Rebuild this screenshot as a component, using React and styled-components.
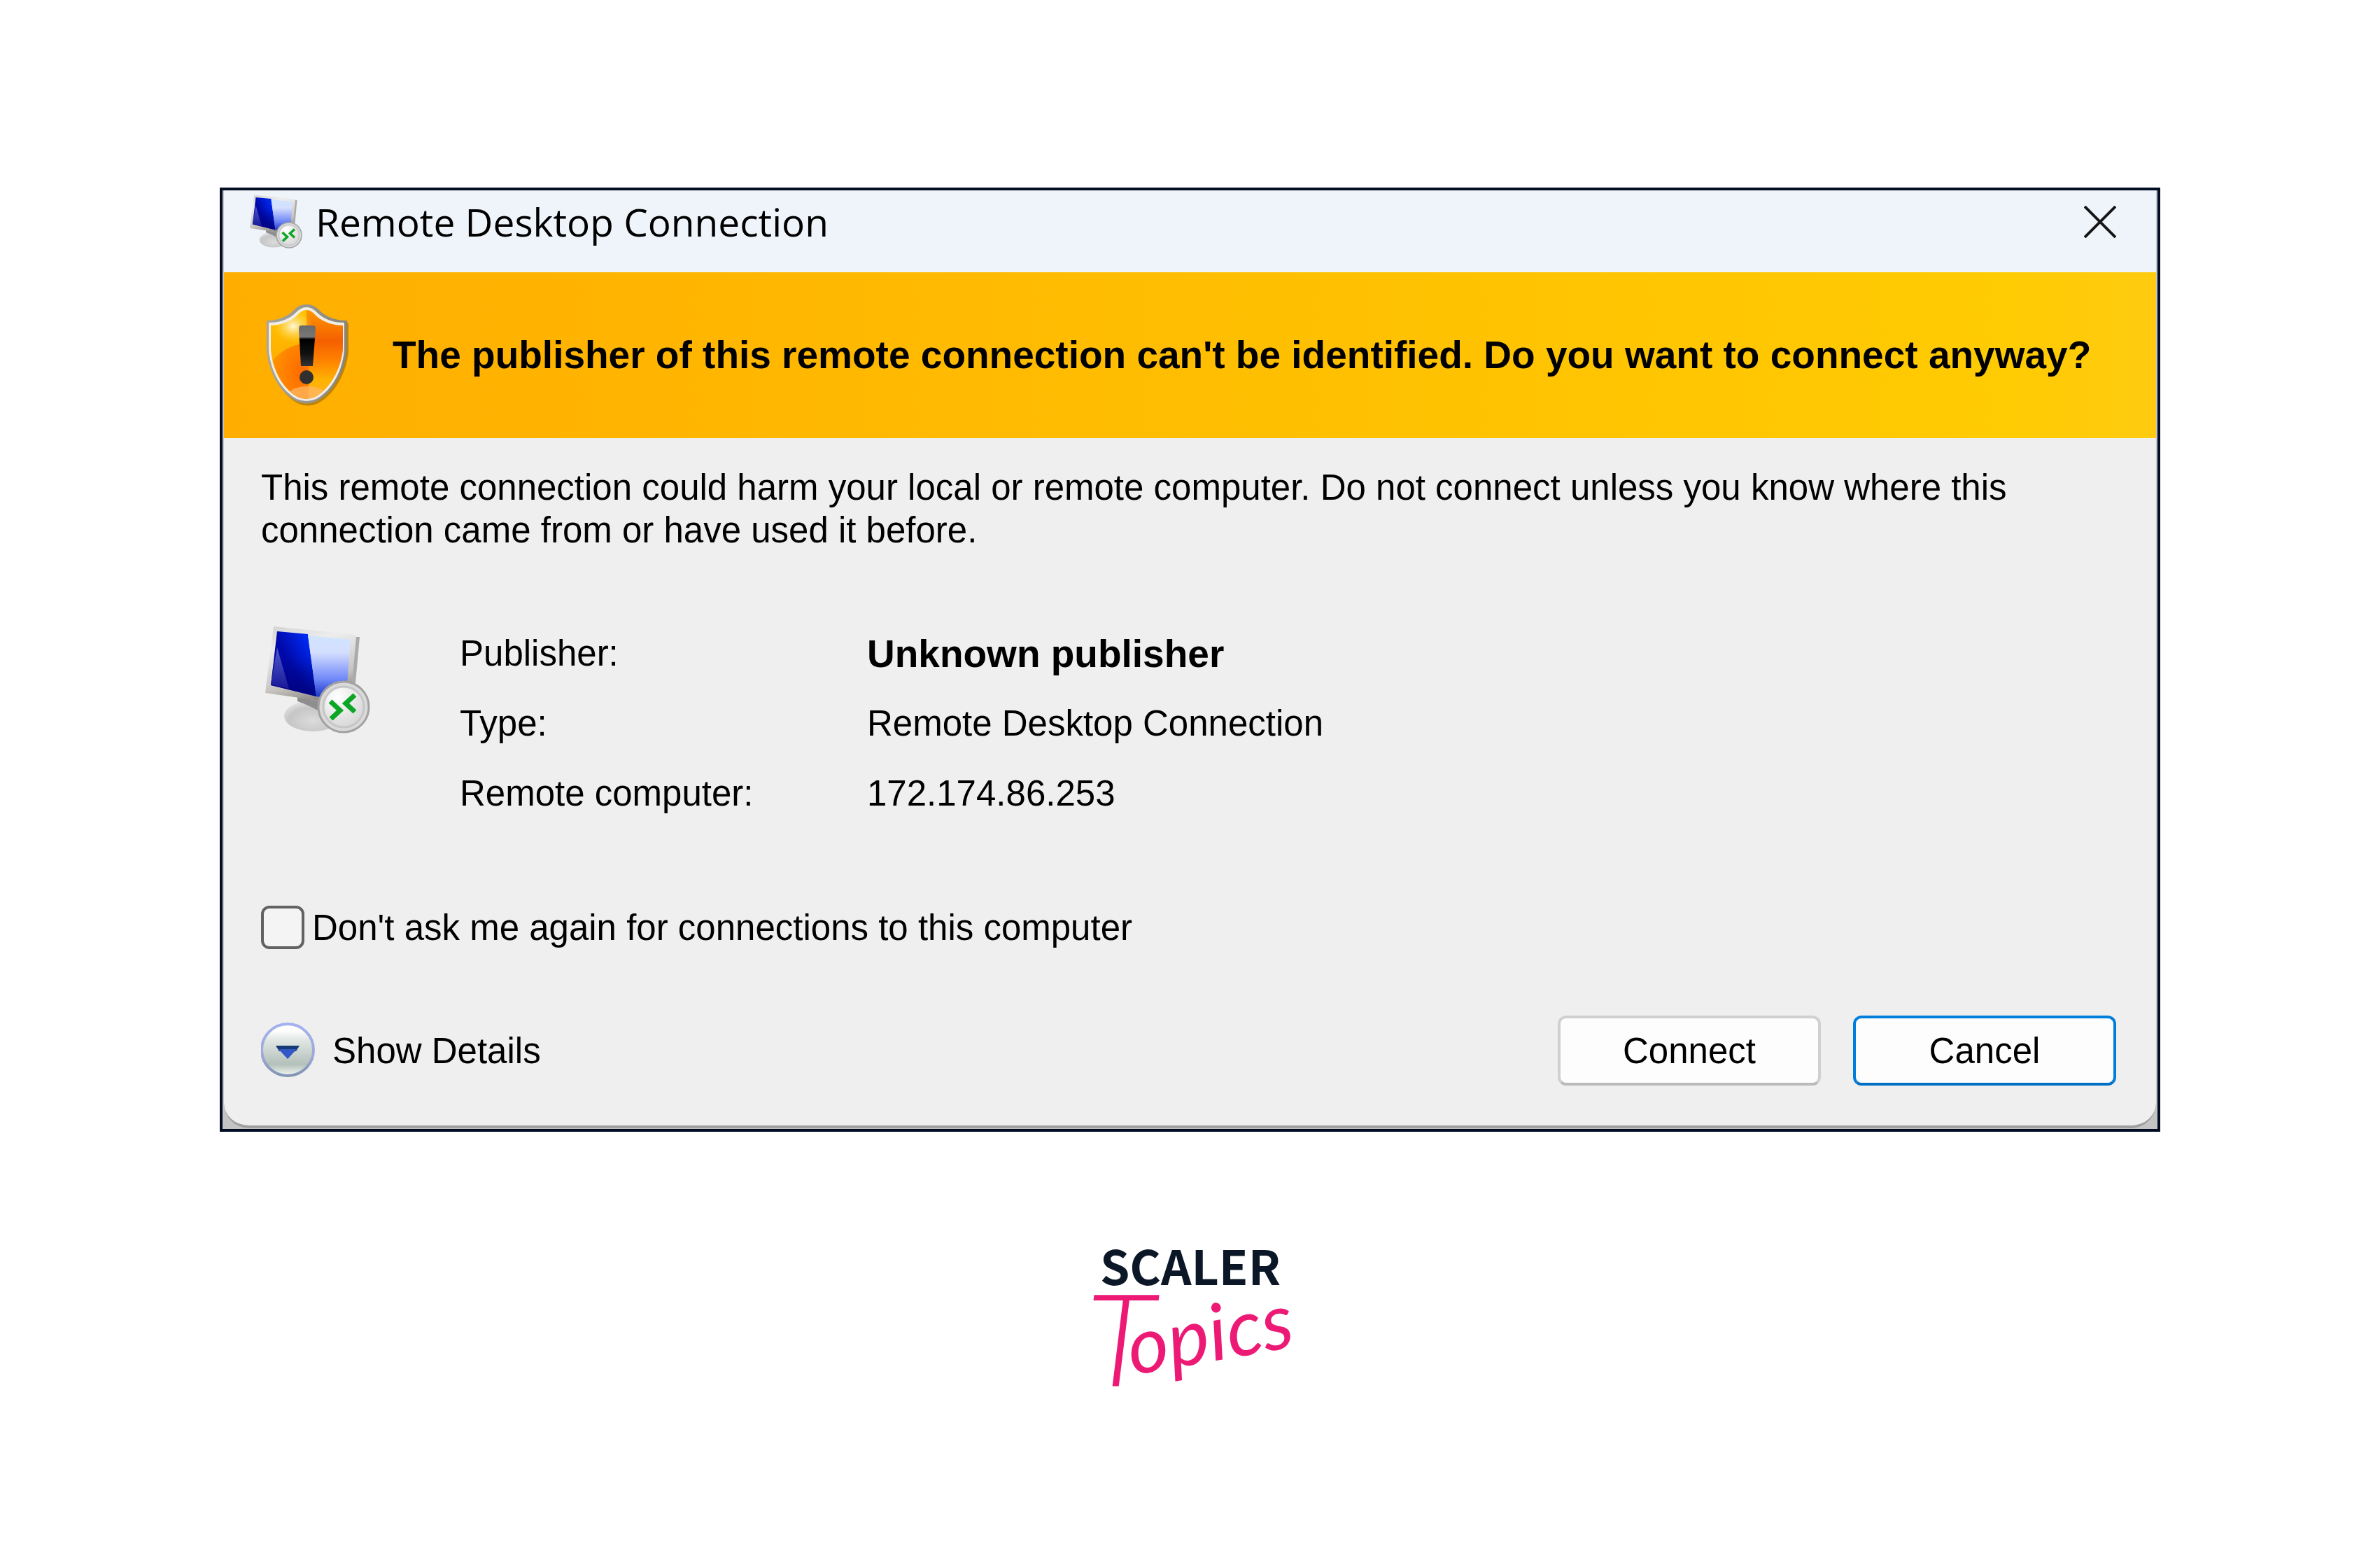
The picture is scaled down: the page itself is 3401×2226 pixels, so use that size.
import React from "react";
import styled, { createGlobalStyle } from "styled-components";

const GlobalStyle = createGlobalStyle`
    *{
        box-sizing: border-box;
    }
    body{
        margin: 0;
        background-color: #fff;
        color: #000;
        font-family: "Liberation Sans", Arial, sans-serif;
        font-size: 51px;
        line-height: 61px;
    }
`;

const Page = styled.main`
    padding: 268px 314px 176px;
`;

const Dialog = styled.section`
    padding: 0 2px 1px;
    border: 4px solid #020d24;
    background-color: #c4c4c4;
`;

const TitleBar = styled.header`
    display: flex;
    align-items: center;
    gap: 17px;
    height: 117px;
    padding: 0 57px 28px 34px;
    background-color: #eff4fb;
`;

const Title = styled.h1`
    flex: 1;
    margin: 0;
    font-family: "Open Sans", "Noto Sans", sans-serif;
    font-size: 55px;
    font-weight: 400;
`;

const CloseButton = styled.button`
    display: flex;
    padding: 0;
    border: 0;
    background: none;
`;

const Banner = styled.div`
    display: flex;
    align-items: center;
    gap: 58px;
    min-height: 237px;
    padding: 0 53px;
    background: linear-gradient(90deg, #ffae00, #ffcb02 92%, #ffcb10);
`;

const BannerText = styled.h2`
    margin: 0;
    font-size: 55px;
    font-weight: 700;
`;

const Body = styled.div`
    padding: 40px 57px 57px 53px;
    border-bottom: 4px solid #a0a0a0;
    border-radius: 0 0 36px 36px;
    background-color: #efefef;
`;

const Message = styled.p`
    margin: 0;
`;

const Info = styled.div`
    display: flex;
    align-items: flex-start;
    gap: 124px;
    margin-top: 96px;

    svg{
        margin-top: 8px;
    }
`;

const Details = styled.dl`
    display: grid;
    grid-template-columns: 582px 1fr;
    flex: 1;
    margin: 0;
    line-height: 100px;
`;

const Label = styled.dt``;

const Value = styled.dd`
    margin: 0;
    font-size: ${({ $strong }) => ($strong ? "55px" : "51px")};
    font-weight: ${({ $strong }) => ($strong ? 700 : 400)};
`;

const CheckRow = styled.label`
    display: flex;
    align-items: center;
    gap: 11px;
    width: fit-content;
    margin-top: 110px;
`;

const Checkbox = styled.input`
    appearance: none;
    width: 62px;
    height: 62px;
    margin: 0;
    border: 4px solid #626262;
    border-radius: 12px;
    background-color: #f4f4f4;
`;

const Actions = styled.div`
    display: flex;
    align-items: center;
    gap: 46px;
    margin-top: 95px;
`;

const DetailsButton = styled.button`
    display: flex;
    align-items: center;
    gap: 22px;
    margin-right: auto;
    padding: 0;
    border: 0;
    background: none;
    color: #000;
    font: inherit;
`;

const Button = styled.button`
    width: 376px;
    height: 100px;
    padding: 0;
    border: 4px solid ${({ $focused }) => ($focused ? "#007edb" : "#d0d0d0")};
    border-bottom-color: ${({ $focused }) => ($focused ? "#0070c4" : "#bababa")};
    border-radius: 12px;
    background-color: #fdfdfd;
    color: #000;
    font: inherit;
`;

const Brand = styled.footer`
    display: flex;
    justify-content: center;
    margin-top: 142px;
`;

const Wordmark = styled.text`
    fill: #0b1727;
    font-family: "Noto Sans CJK SC", "Open Sans", sans-serif;
    font-size: 68px;
    font-weight: 700;
`;

const Script = styled.text`
    fill: #ed1a75;
    font-family: Lato, "Open Sans", sans-serif;
    font-size: ${({ $initial }) => ($initial ? "184px" : "112px")};
    font-style: italic;
    font-weight: ${({ $initial }) => ($initial ? 300 : 400)};
`;

const ComputerIcon = ({ size, id }) => (
    <svg width={size} height={size} viewBox="12 22 160 160" aria-hidden="true">
        <defs>
            <linearGradient id={`${id}-frame`} x1="0" y1="0" x2="0.3" y2="1">
                <stop offset="0" stopColor="#d2d2d0" />
                <stop offset="0.3" stopColor="#ededed" />
                <stop offset="0.75" stopColor="#c9c6c2" />
                <stop offset="1" stopColor="#8d8884" />
            </linearGradient>
            <linearGradient id={`${id}-dark`} x1="0" y1="1" x2="1" y2="0.2">
                <stop offset="0" stopColor="#00009c" />
                <stop offset="0.5" stopColor="#0009a8" />
                <stop offset="1" stopColor="#0030ff" />
            </linearGradient>
            <linearGradient id={`${id}-shade`} x1="0" y1="0" x2="0" y2="1">
                <stop offset="0.4" stopColor="#00006c" stopOpacity="0" />
                <stop offset="1" stopColor="#00006c" stopOpacity="0.7" />
            </linearGradient>
            <linearGradient id={`${id}-light`} x1="0" y1="0" x2="0" y2="1">
                <stop offset="0" stopColor="#cfe4ff" />
                <stop offset="0.25" stopColor="#d5dfff" />
                <stop offset="0.65" stopColor="#7088f8" />
                <stop offset="0.9" stopColor="#1f3ccc" />
            </linearGradient>
            <linearGradient id={`${id}-glare`} x1="0" y1="0" x2="0" y2="1">
                <stop offset="0" stopColor="#6a74d8" />
                <stop offset="1" stopColor="#2020a0" />
            </linearGradient>
            <radialGradient id={`${id}-base`} cx="0.5" cy="0.65" r="0.6">
                <stop offset="0" stopColor="#dcdcdc" />
                <stop offset="0.7" stopColor="#c6c6c6" />
                <stop offset="1" stopColor="#dedede" />
            </radialGradient>
            <radialGradient id={`${id}-badge`} cx="0.35" cy="0.25" r="0.8">
                <stop offset="0" stopColor="#fff" />
                <stop offset="1" stopColor="#d6d6d6" />
            </radialGradient>
        </defs>
        <ellipse cx="86" cy="153" rx="41" ry="22" fill={`url(#${id}-base)`} />
        <path d="M64 126L100 132L98 148Q82 138 64 132Z" fill="#8e8e8e" />
        <path d="M30 25L148 37L145 139L95 131L18 120Z" fill={`url(#${id}-frame)`} />
        <path d="M148 40H153L147 106H142Z" fill="#aaa" />
        <path d="M35 32L79 36L91 125L26 109Z" fill={`url(#${id}-dark)`} />
        <path d="M35 32L79 36L91 125L26 109Z" fill={`url(#${id}-shade)`} />
        <path d="M35 55L52 114L26 108Z" fill={`url(#${id}-glare)`} opacity="0.75" />
        <path d="M79 38L140 44L133 134L91 125Z" fill={`url(#${id}-light)`} />
        <circle cx="130" cy="140" r="36" fill="#dadada" stroke="#a2a2a2" strokeWidth="3" />
        <circle cx="130" cy="140" r="29" fill={`url(#${id}-badge)`} stroke="#c6c6c6" strokeWidth="3" />
        <path d="M111 132L125 145L112 157M146 123L133 135L146 147" fill="none" stroke="#0ba625" strokeWidth="7" />
    </svg>
);

const ShieldIcon = () => (
    <svg width="130" height="156" viewBox="12 10 130 156" aria-hidden="true">
        <defs>
            <linearGradient id="shield-edge" x1="0" y1="0" x2="1" y2="0">
                <stop offset="0" stopColor="#aaa69c" />
                <stop offset="1" stopColor="#878480" />
            </linearGradient>
            <linearGradient id="shield-left" x1="0" y1="0" x2="0" y2="1">
                <stop offset="0" stopColor="#ffc400" />
                <stop offset="1" stopColor="#ff9c00" />
            </linearGradient>
            <linearGradient id="shield-right" x1="0" y1="0" x2="0" y2="1">
                <stop offset="0" stopColor="#ffa200" />
                <stop offset="0.36" stopColor="#f45f00" />
                <stop offset="0.55" stopColor="#ff8200" />
                <stop offset="0.75" stopColor="#ffb400" />
                <stop offset="1" stopColor="#ffa830" />
            </linearGradient>
            <radialGradient id="shield-low" cx="0.8" cy="0.45" r="0.7">
                <stop offset="0" stopColor="#ff6a00" />
                <stop offset="1" stopColor="#ff9200" />
            </radialGradient>
            <radialGradient id="shield-shine">
                <stop offset="0" stopColor="#fff8dc" />
                <stop offset="1" stopColor="#ffd840" stopOpacity="0" />
            </radialGradient>
            <linearGradient id="shield-mark" x1="0" y1="0" x2="0" y2="1">
                <stop offset="0" stopColor="#6a6a6a" />
                <stop offset="0.28" stopColor="#777" />
                <stop offset="0.34" stopColor="#000" />
                <stop offset="0.7" stopColor="#111" />
                <stop offset="1" stopColor="#333" />
            </linearGradient>
            <clipPath id="shield-clip">
                <path d="M77 23C69 23 66 29 60 34C50 41 38 45 26 45V80C29 112 45 136 64 147Q77 153 90 147C109 136 125 112 129 80V45C116 45 104 41 94 34C88 29 85 23 77 23Z" />
            </clipPath>
        </defs>
        <path d="M79 19C68 19 64 24 58 30C48 38 36 41 24 41V83C27 118 44 145 64 156Q79 163 94 156C114 145 133 118 137 83V41C122 41 110 38 100 30C94 24 90 19 79 19Z" fill="#000" opacity="0.25" />
        <path d="M77 15C66 15 62 20 56 26C46 34 34 38 20 38V80C23 115 41 142 62 153Q77 160 92 153C113 142 131 115 135 80V38C120 38 108 34 98 26C92 20 88 15 77 15Z" fill="url(#shield-edge)" />
        <path d="M77 19C68 19 64 25 58 30C48 38 36 41 23 41V80C26 114 43 139 63 150Q77 156 91 150C111 139 128 114 131 80V41C118 41 106 38 96 30C90 25 86 19 77 19Z" fill="#f1eee6" />
        <g clipPath="url(#shield-clip)">
            <path d="M20 15H77V160H20Z" fill="url(#shield-left)" />
            <path d="M77 15H135V160H77Z" fill="url(#shield-right)" />
            <path d="M24 100Q44 76 66 72H80V160H24Z" fill="url(#shield-low)" />
            <ellipse cx="58" cy="46" rx="28" ry="24" fill="url(#shield-shine)" />
            <ellipse cx="78" cy="146" rx="28" ry="14" fill="#ffb968" opacity="0.7" />
        </g>
        <path d="M69 45H86Q90 45 90 50L86 103H69L66 50Q66 45 69 45Z" fill="url(#shield-mark)" />
        <circle cx="77" cy="119" r="10" fill="#303030" />
    </svg>
);

const CloseIcon = () => (
    <svg width="46" height="46" viewBox="0 0 46 46" aria-hidden="true">
        <path d="M1 1L45 45M45 1L1 45" stroke="#161616" strokeWidth="4" />
    </svg>
);

const ExpandIcon = () => (
    <svg width="80" height="80" viewBox="0 0 80 80" aria-hidden="true">
        <defs>
            <linearGradient id="expand-fill" x1="0" y1="0" x2="0" y2="1">
                <stop offset="0.12" stopColor="#fff" />
                <stop offset="0.3" stopColor="#e2e8e5" />
                <stop offset="0.78" stopColor="#b4c0ba" />
                <stop offset="1" stopColor="#f4faf4" />
            </linearGradient>
            <linearGradient id="expand-edge" x1="0" y1="0" x2="0" y2="1">
                <stop offset="0" stopColor="#a3b2ee" />
                <stop offset="0.6" stopColor="#9eaad8" />
                <stop offset="1" stopColor="#8193b4" />
            </linearGradient>
        </defs>
        <circle cx="38" cy="39" r="37" fill="url(#expand-fill)" stroke="url(#expand-edge)" strokeWidth="4" />
        <path d="M21 33H55L50 41H26Z" fill="#173a76" />
        <path d="M25 38H51L38 52Z" fill="#3457c8" />
    </svg>
);

const details = [
    { label: "Publisher:", value: "Unknown publisher", strong: true },
    { label: "Type:", value: "Remote Desktop Connection" },
    { label: "Remote computer:", value: "172.174.86.253" },
];

const App = () => {

    return (
        <Page>
            <GlobalStyle />
            <Dialog role="dialog" aria-labelledby="dialog-title">
                <TitleBar>
                    <ComputerIcon size={80} id="title" />
                    <Title id="dialog-title">Remote Desktop Connection</Title>
                    <CloseButton type="button" aria-label="Close">
                        <CloseIcon />
                    </CloseButton>
                </TitleBar>
                <Banner>
                    <ShieldIcon />
                    <BannerText>
                        The publisher of this remote connection can't be identified. Do you want to connect anyway?
                    </BannerText>
                </Banner>
                <Body>
                    <Message>
                        This remote connection could harm your local or remote computer. Do not connect unless you know where this connection came from or have used it before.
                    </Message>
                    <Info>
                        <ComputerIcon size={160} id="remote" />
                        <Details>
                            {details.map(({ label, value, strong }) => (
                                <React.Fragment key={label}>
                                    <Label>{label}</Label>
                                    <Value $strong={strong}>{value}</Value>
                                </React.Fragment>
                            ))}
                        </Details>
                    </Info>
                    <CheckRow>
                        <Checkbox type="checkbox" />
                        Don't ask me again for connections to this computer
                    </CheckRow>
                    <Actions>
                        <DetailsButton type="button">
                            <ExpandIcon />
                            Show Details
                        </DetailsButton>
                        <Button type="button">Connect</Button>
                        <Button type="button" $focused>Cancel</Button>
                    </Actions>
                </Body>
            </Dialog>
            <Brand>
                <svg width="342" height="290" viewBox="0 0 342 290">
                    <Wordmark x="171" y="77" textAnchor="middle">SCALER</Wordmark>
                    <Script $initial x="22" y="222">T</Script>
                    <Script x="88" y="206" transform="rotate(-10 88 206)">opics</Script>
                </svg>
            </Brand>
        </Page>
    );
};


export default App;
